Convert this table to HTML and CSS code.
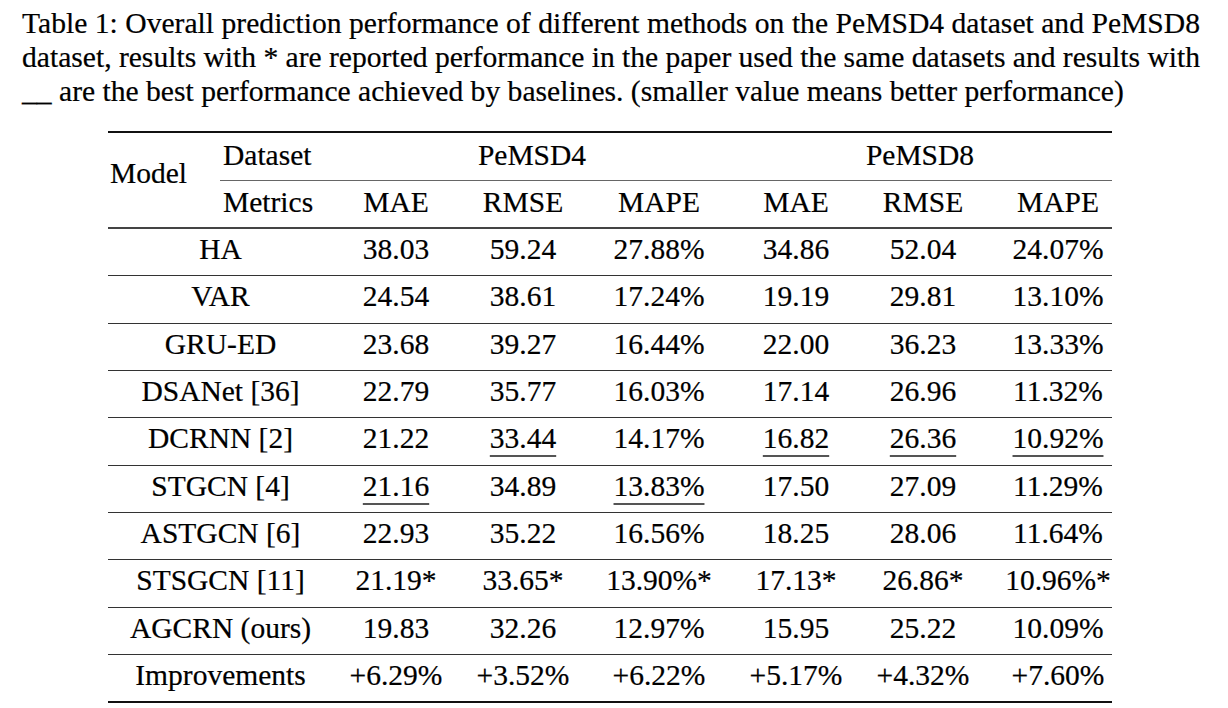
FILE: index.html
```html
<!DOCTYPE html>
<html>
<head>
<meta charset="utf-8">
<link rel="stylesheet" href="styles.css">
</head>
<body>
<p class="caption"><span class="cline full">Table 1: Overall prediction performance of different methods on the PeMSD4 dataset and PeMSD8</span> <span class="cline full">dataset, results with * are reported performance in the paper used the same datasets and results with</span> <span class="cline">__ are the best performance achieved by baselines. (smaller value means better performance)</span></p>
<div class="table">
  <div class="head">
    <div class="model-label">Model</div>
    <div class="head-right">
      <div class="hrow hrow-top">
        <div class="hcell hleft">Dataset</div>
        <div class="hcell span3">PeMSD4</div>
        <div class="hcell span3 last">PeMSD8</div>
      </div>
      <div class="hrow">
        <div class="hcell hleft">Metrics</div>
        <div class="hcell">MAE</div>
        <div class="hcell">RMSE</div>
        <div class="hcell">MAPE</div>
        <div class="hcell">MAE</div>
        <div class="hcell">RMSE</div>
        <div class="hcell last">MAPE</div>
      </div>
    </div>
  </div>
  <div class="row"><div class="name">HA</div><div class="c">38.03</div><div class="c">59.24</div><div class="c">27.88%</div><div class="c">34.86</div><div class="c">52.04</div><div class="c last">24.07%</div></div>
  <div class="row"><div class="name">VAR</div><div class="c">24.54</div><div class="c">38.61</div><div class="c">17.24%</div><div class="c">19.19</div><div class="c">29.81</div><div class="c last">13.10%</div></div>
  <div class="row"><div class="name">GRU-ED</div><div class="c">23.68</div><div class="c">39.27</div><div class="c">16.44%</div><div class="c">22.00</div><div class="c">36.23</div><div class="c last">13.33%</div></div>
  <div class="row"><div class="name">DSANet [36]</div><div class="c">22.79</div><div class="c">35.77</div><div class="c">16.03%</div><div class="c">17.14</div><div class="c">26.96</div><div class="c last">11.32%</div></div>
  <div class="row"><div class="name">DCRNN [2]</div><div class="c">21.22</div><div class="c"><span class="best">33.44</span></div><div class="c">14.17%</div><div class="c"><span class="best">16.82</span></div><div class="c"><span class="best">26.36</span></div><div class="c last"><span class="best">10.92%</span></div></div>
  <div class="row"><div class="name">STGCN [4]</div><div class="c"><span class="best">21.16</span></div><div class="c">34.89</div><div class="c"><span class="best">13.83%</span></div><div class="c">17.50</div><div class="c">27.09</div><div class="c last">11.29%</div></div>
  <div class="row"><div class="name">ASTGCN [6]</div><div class="c">22.93</div><div class="c">35.22</div><div class="c">16.56%</div><div class="c">18.25</div><div class="c">28.06</div><div class="c last">11.64%</div></div>
  <div class="row"><div class="name">STSGCN [11]</div><div class="c">21.19*</div><div class="c">33.65*</div><div class="c">13.90%*</div><div class="c">17.13*</div><div class="c">26.86*</div><div class="c last">10.96%*</div></div>
  <div class="row"><div class="name">AGCRN (ours)</div><div class="c">19.83</div><div class="c">32.26</div><div class="c">12.97%</div><div class="c">15.95</div><div class="c">25.22</div><div class="c last">10.09%</div></div>
  <div class="row row-last"><div class="name">Improvements</div><div class="c">+6.29%</div><div class="c">+3.52%</div><div class="c">+6.22%</div><div class="c">+5.17%</div><div class="c">+4.32%</div><div class="c last">+7.60%</div></div>
</div>
</body>
</html>
```

FILE: styles.css
```css
html, body {
  margin: 0;
  padding: 0;
  background: #ffffff;
  color: #000000;
  font-family: "Liberation Serif", "Times New Roman", serif;
}

body {
  width: 1228px;
  height: 708px;
  overflow: hidden;
}

.caption {
  margin: 0;
  padding: 6px 28px 0 22px;
  font-size: 29.6px;
  line-height: 34px;
  -webkit-text-stroke: 0.2px #000;
}

.cline {
  display: block;
  white-space: nowrap;
  text-align: left;
}

.cline.full {
  word-spacing: -2px;
  text-align: justify;
  text-align-last: justify;
}

.table {
  margin: 23px 0 0 108px;
  width: 1004px;
  border-top: 2px solid #111;
  font-size: 29.5px;
  -webkit-text-stroke: 0.2px #000;
}

.head {
  display: flex;
  border-bottom: 2px solid #444;
}

.model-label {
  width: 107px;
  padding-left: 2px;
  padding-bottom: 14px;
  box-sizing: border-box;
  display: flex;
  align-items: center;
  line-height: 32px;
}

.head-right {
  flex: 1;
  display: flex;
  flex-direction: column;
}

.hrow {
  display: grid;
  grid-template-columns: 121px 120px 134px 138px 136px 118px 130px;
  height: 46px;
  line-height: 42px;
}

.hrow-top {
  height: 47px;
  line-height: 44px;
  border-bottom: 1px solid #666;
  margin-left: 5px;
  grid-template-columns: 116px 392px 384px;
}

.hcell {
  text-align: center;
}

.hrow .hleft {
  text-align: left;
  padding-left: 8px;
}

.hrow-top .hleft {
  padding-left: 3px;
}

.last {
  padding-left: 22px;
}

.hrow-top .last {
  padding-left: 0;
}

.row {
  display: grid;
  grid-template-columns: 228px 120px 134px 138px 136px 118px 130px;
  height: 47.35px;
  box-sizing: border-box;
  border-bottom: 1px solid #333;
  line-height: 41px;
}

.row-last {
  border-bottom: 2px solid #111;
  height: 48px;
}

.name {
  text-align: center;
  padding-right: 3px;
}

.c {
  text-align: center;
}

.best {
  text-decoration: underline;
  text-decoration-color: #555;
  text-decoration-thickness: 1.5px;
  text-underline-offset: 7px;
}
```
